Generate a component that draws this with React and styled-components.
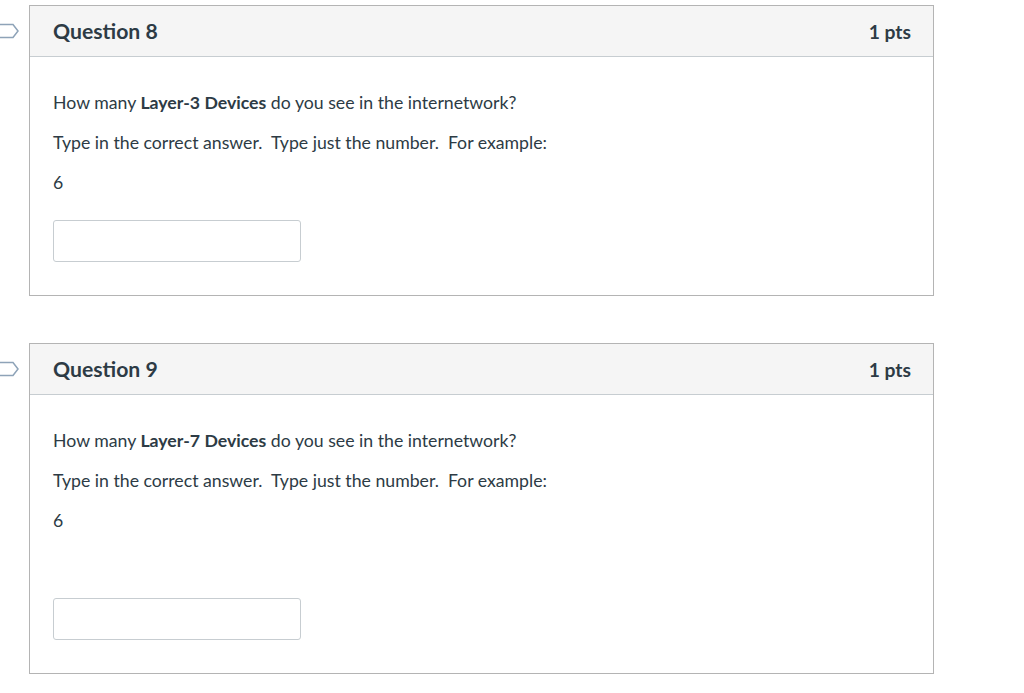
import React from 'react';
import styled, { createGlobalStyle } from 'styled-components';

const Global = createGlobalStyle`
  body {
    margin: 0;
    background: #fff;
    font-family: Lato, "Open Sans", sans-serif;
    color: #2d3b45;
  }
`;

const Page = styled.div`
  padding: 5px 0 0 0;
  display: flex;
  flex-direction: column;
  gap: 47px;
`;

const Row = styled.div`
  position: relative;
  padding-left: 29px;
  width: 905px;
`;

const Flag = styled.svg`
  position: absolute;
  left: -1px;
  top: 18px;
`;

const Card = styled.div`
  border: 1px solid #b4b4b4;
`;

const Header = styled.div`
  height: 50px;
  background: #f5f5f5;
  border-bottom: 1px solid #c7cdd1;
  display: flex;
  align-items: center;
  justify-content: space-between;
  padding: 0 22px 0 23px;
`;

const Title = styled.h2`
  margin: 0;
  font-size: 21.2px;
  font-weight: 700;
  color: #2d3b45;
`;

const Pts = styled.span`
  font-size: 19.3px;
  font-weight: 700;
  color: #2d3b45;
`;

const Body = styled.div`
  padding: 34px 23px 33px;
`;

const Para = styled.p`
  margin: 0 0 16px;
  font-size: 17.7px;
  line-height: 24px;
  min-height: 24px;
`;

const Answer = styled.input`
  display: block;
  margin-top: 25px;
  width: 248px;
  height: 42px;
  box-sizing: border-box;
  border: 1px solid #c7cdd1;
  border-radius: 3px;
  background: #fff;
`;

function Question({ n, layer, extra }) {
  return (
    <Row>
      <Flag width="22" height="16" viewBox="0 0 22 16">
        <path d="M0 1.5 H14 L19 8 L14 14.5 H0" fill="none" stroke="#8ea3b8" strokeWidth="1.5" />
      </Flag>
      <Card>
        <Header>
          <Title>Question {n}</Title>
          <Pts>1 pts</Pts>
        </Header>
        <Body>
          <Para>How many <b>Layer-{layer} Devices</b> do you see in the internetwork?</Para>
          <Para>Type in the correct answer.&nbsp; Type just the number.&nbsp; For example:</Para>
          <Para>6</Para>
          {extra && <Para />}
          <Answer />
        </Body>
      </Card>
    </Row>
  );
}

export default function App() {
  return (
    <Page>
      <Global />
      <Question n={8} layer={3} />
      <Question n={9} layer={7} extra />
    </Page>
  );
}
